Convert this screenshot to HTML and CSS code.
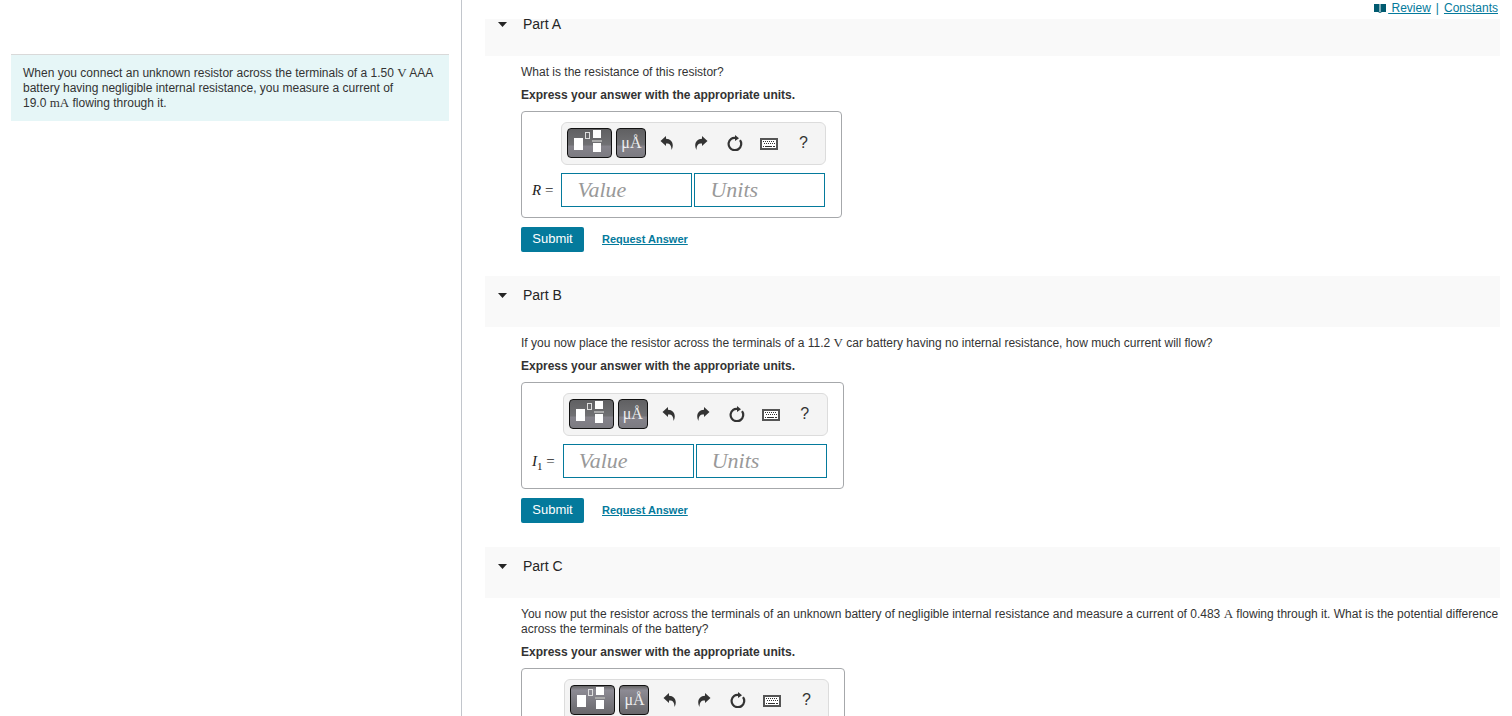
FILE: index.html
```html
<!DOCTYPE html>
<html lang="en">
<head>
    <meta charset="UTF-8">
    <meta name="viewport" content="width=device-width, initial-scale=1.0">
    <title>Resistor Problem</title>
    <link rel="stylesheet" href="styles.css">
</head>
<body>
    <!-- shared icons -->
    <svg class="icon-defs" width="0" height="0" aria-hidden="true">
        <symbol id="icon-template" viewBox="0 0 43 28">
            <rect x="6" y="9" width="9" height="12" fill="#fff"/>
            <rect x="17.5" y="3.5" width="4" height="6" fill="none" stroke="#ddd"/>
            <rect x="25" y="1" width="8" height="8" fill="#fff"/>
            <rect x="24" y="11" width="10" height="2" fill="#aaa"/>
            <rect x="25" y="14" width="8" height="9" fill="#fff"/>
        </symbol>
        <symbol id="icon-undo" viewBox="0 0 14 14">
            <path d="M6 0L0.5 5L6 10V7.5C9.5 7.2 11.5 9 11.5 14C14.5 8.500 12 3 6 2.800Z" fill="#333"/>
        </symbol>
        <symbol id="icon-redo" viewBox="0 0 14 14">
            <path d="M8 0L13.5 5L8 10V7.5C4.5 7.2 2.5 9 2.5 14C-0.5 8.5 2 3 8 2.8Z" fill="#333"/>
        </symbol>
        <symbol id="icon-reset" viewBox="0 0 16 16">
            <path d="M13 5.200A6.300 6.300 0 1 1 4.200 3.800Q6 2.500 9 3" fill="none" stroke="#333" stroke-width="2.200"/>
            <path d="M8 0L12 3.200L8 6Z" fill="#333"/>
        </symbol>
        <symbol id="icon-keyboard" viewBox="0 0 18 12">
            <rect x="1" y="1" width="16" height="10" fill="#fff" stroke="#555" stroke-width="2"/>
            <path d="M3 3.5H15" stroke="#333" stroke-dasharray="1 1"/>
            <path d="M4 5.5H15" stroke="#333" stroke-dasharray="1 1"/>
            <path d="M3 8.5H4M5 8.500H12M13 8.500H15" stroke="#333"/>
        </symbol>
    </svg>

    <aside class="problem">
        <p class="problem-text">When you connect an unknown resistor across the terminals of a 1.50 <span class="unit">V</span> AAA battery having negligible internal resistance, you measure a current of 19.0&nbsp;<span class="unit">mA</span> flowing through it.</p>
    </aside>

    <main class="parts">
        <nav class="top-links">
            <svg class="book" viewBox="0 0 12 9" aria-hidden="true">
                <path d="M0 0H5.5V8H0ZM6.5 0H12V8H6.5Z" fill="#005a70"/>
                <path d="M4 8L6 9L8 8Z" fill="#005a70"/>
            </svg>
            <a href="#review">&nbsp;Review</a>
            <span class="divider">|</span>
            <a href="#constants">Constants</a>
        </nav>

        <section class="part">
            <h2 class="part-header"><button class="toggle" aria-label="Collapse Part A"></button>Part A</h2>
            <div class="part-body">
                <p class="question">What is the resistance of this resistor?</p>
                <p class="instruction">Express your answer with the appropriate units.</p>
                <form class="answer">
                    <div class="answer-box">
                        <div class="toolbar">
                            <button type="button" class="palette wide" aria-label="Templates"><svg><use href="#icon-template"/></svg></button>
                            <button type="button" class="palette">μÅ</button>
                            <button type="button" class="tool" aria-label="Undo"><svg width="14" height="14"><use href="#icon-undo"/></svg></button>
                            <button type="button" class="tool" aria-label="Redo"><svg width="14" height="14"><use href="#icon-redo"/></svg></button>
                            <button type="button" class="tool" aria-label="Reset"><svg width="16" height="16"><use href="#icon-reset"/></svg></button>
                            <button type="button" class="tool" aria-label="Keyboard"><svg class="keys" width="18" height="12"><use href="#icon-keyboard"/></svg></button>
                            <button type="button" class="tool">?</button>
                        </div>
                        <label class="symbol" for="valueA"><i>R</i> =</label>
                        <div class="fields">
                            <input type="text" id="valueA" placeholder="Value">
                            <input type="text" id="unitsA" placeholder="Units" aria-label="Units">
                        </div>
                    </div>
                    <div class="actions">
                        <button type="button" class="submit">Submit</button>
                        <a href="#answerA">Request Answer</a>
                    </div>
                </form>
            </div>
        </section>

        <section class="part">
            <h2 class="part-header"><button class="toggle" aria-label="Collapse Part B"></button>Part B</h2>
            <div class="part-body">
                <p class="question">If you now place the resistor across the terminals of a 11.2 <span class="unit">V</span> car battery having no internal resistance, how much current will flow?</p>
                <p class="instruction">Express your answer with the appropriate units.</p>
                <form class="answer">
                    <div class="answer-box">
                        <div class="toolbar">
                            <button type="button" class="palette wide" aria-label="Templates"><svg><use href="#icon-template"/></svg></button>
                            <button type="button" class="palette">μÅ</button>
                            <button type="button" class="tool" aria-label="Undo"><svg width="14" height="14"><use href="#icon-undo"/></svg></button>
                            <button type="button" class="tool" aria-label="Redo"><svg width="14" height="14"><use href="#icon-redo"/></svg></button>
                            <button type="button" class="tool" aria-label="Reset"><svg width="16" height="16"><use href="#icon-reset"/></svg></button>
                            <button type="button" class="tool" aria-label="Keyboard"><svg class="keys" width="18" height="12"><use href="#icon-keyboard"/></svg></button>
                            <button type="button" class="tool">?</button>
                        </div>
                        <label class="symbol" for="valueB"><i>I</i><sub>1</sub> =</label>
                        <div class="fields">
                            <input type="text" id="valueB" placeholder="Value">
                            <input type="text" id="unitsB" placeholder="Units" aria-label="Units">
                        </div>
                    </div>
                    <div class="actions">
                        <button type="button" class="submit">Submit</button>
                        <a href="#answerB">Request Answer</a>
                    </div>
                </form>
            </div>
        </section>

        <section class="part">
            <h2 class="part-header"><button class="toggle" aria-label="Collapse Part C"></button>Part C</h2>
            <div class="part-body">
                <p class="question">You now put the resistor across the terminals of an unknown battery of negligible internal resistance and measure a current of 0.483 <span class="unit">A</span> flowing through it. What is the potential difference across the terminals of the battery?</p>
                <p class="instruction">Express your answer with the appropriate units.</p>
                <form class="answer">
                    <div class="answer-box">
                        <div class="toolbar light">
                            <button type="button" class="palette wide" aria-label="Templates"><svg><use href="#icon-template"/></svg></button>
                            <button type="button" class="palette">μÅ</button>
                            <button type="button" class="tool" aria-label="Undo"><svg width="14" height="14"><use href="#icon-undo"/></svg></button>
                            <button type="button" class="tool" aria-label="Redo"><svg width="14" height="14"><use href="#icon-redo"/></svg></button>
                            <button type="button" class="tool" aria-label="Reset"><svg width="16" height="16"><use href="#icon-reset"/></svg></button>
                            <button type="button" class="tool" aria-label="Keyboard"><svg class="keys" width="18" height="12"><use href="#icon-keyboard"/></svg></button>
                            <button type="button" class="tool">?</button>
                        </div>
                        <label class="symbol" for="valueC"><i>V<sub>t</sub></i> =</label>
                        <div class="fields">
                            <input type="text" id="valueC" placeholder="Value">
                            <input type="text" id="unitsC" placeholder="Units" aria-label="Units">
                        </div>
                    </div>
                    <div class="actions">
                        <button type="button" class="submit">Submit</button>
                        <a href="#answerC">Request Answer</a>
                    </div>
                </form>
            </div>
        </section>
    </main>
</body>
</html>
```
FILE: styles.css
```css
* {
    box-sizing: border-box;
}

body {
    margin: 0;
    display: flex;
    height: 100vh;
    overflow: hidden;
    background: #fff;
    color: #333;
    font-family: "Liberation Sans", Arial, sans-serif;
    font-size: 12px;
    line-height: 15px;
}

p, h2 {
    margin: 0;
}

a {
    color: #047a9c;
}

button {
    padding: 0;
    border: none;
    background: none;
    font-family: inherit;
    cursor: pointer;
}

.icon-defs {
    position: absolute;
}

.unit {
    font-family: "Liberation Serif", "Times New Roman", serif;
    font-size: 13px;
    line-height: 1;
}

/* left pane */
.problem {
    flex: 0 0 462px;
    padding: 54px 12px 0 11px;
    border-right: 1px solid #c2c6cc;
}

.problem-text {
    padding: 11px 12px 10px;
    border-top: 1px solid #d9d9d9;
    background: #e6f6f7;
}

/* right pane */
.parts {
    flex: 1;
    padding: 0 12px 0 23px;
    overflow: hidden;
}

.top-links {
    position: sticky;
    top: 0;
    z-index: 1;
    display: flex;
    justify-content: flex-end;
    align-items: flex-start;
    gap: 5px;
    height: 19px;
    margin-bottom: -14px;
    padding: 1px 2px 0 0;
    background: #fff;
}

.divider {
    color: #047a9c;
}

.book {
    width: 12px;
    height: 9px;
    margin: 3px -3px 0 0;
}

.part-header {
    display: flex;
    align-items: flex-start;
    gap: 16px;
    height: 51px;
    padding: 12px 13px;
    background: #f9f9f9;
    color: #252525;
    font-size: 14px;
    font-weight: normal;
}

.toggle {
    width: 9px;
    height: 5px;
    margin-top: 5px;
    background: #252525;
    clip-path: polygon(0 0, 100% 0, 50% 100%);
}

.part-body {
    padding: 9px 0 24px 36px;
}

.instruction {
    margin: 8px 0;
    font-weight: bold;
}

.answer-box {
    display: grid;
    grid-template-columns: auto auto;
    gap: 8px;
    width: fit-content;
    padding: 10px 15px 10px 10px;
    border: 1px solid #a6a8ab;
    border-radius: 4px;
}

.toolbar {
    grid-column: 2;
    display: flex;
    align-items: center;
    height: 43px;
    padding: 0 5px 2px;
    border: 1px solid #dcdcdc;
    border-radius: 6px;
    background: #f4f4f4;
}

.palette {
    display: flex;
    align-items: center;
    justify-content: center;
    width: 30px;
    height: 30px;
    margin-right: 4px;
    border: 1px solid #111;
    border-radius: 4px;
    background: linear-gradient(#606062, #717174 58%, #85838b 60%, #7c7b81);
    color: #eee;
    font-family: "Liberation Serif", "Times New Roman", serif;
    font-size: 16px;
}

.palette.wide {
    width: 45px;
}

.palette svg {
    width: 43px;
    height: 28px;
}

.light .palette {
    background: linear-gradient(#666, #8d8b94 15%, #68676b);
}

.tool {
    display: flex;
    align-items: center;
    justify-content: center;
    width: 34px;
    height: 30px;
    color: #333;
    font-size: 16px;
}

.keys {
    margin-top: 3px;
}

.symbol {
    align-self: center;
    font-family: "Liberation Serif", "Times New Roman", serif;
    font-size: 15px;
    color: #222;
}

.symbol sub {
    font-size: 11px;
    line-height: 0;
}

.fields {
    display: flex;
    gap: 2px;
}

.fields input {
    width: 131px;
    height: 34px;
    padding: 0 15px;
    border: 1px solid #047a9c;
    font-family: "Liberation Serif", "Times New Roman", serif;
    font-size: 22px;
}

.fields input::placeholder {
    color: #999;
    font-style: italic;
}

.actions {
    display: flex;
    align-items: center;
    gap: 18px;
    margin-top: 9px;
    font-size: 11px;
    font-weight: bold;
}

.submit {
    width: 63px;
    height: 25px;
    padding-bottom: 2px;
    border-radius: 2px;
    background: #047a9c;
    color: #fff;
    font-size: 13px;
}
```
